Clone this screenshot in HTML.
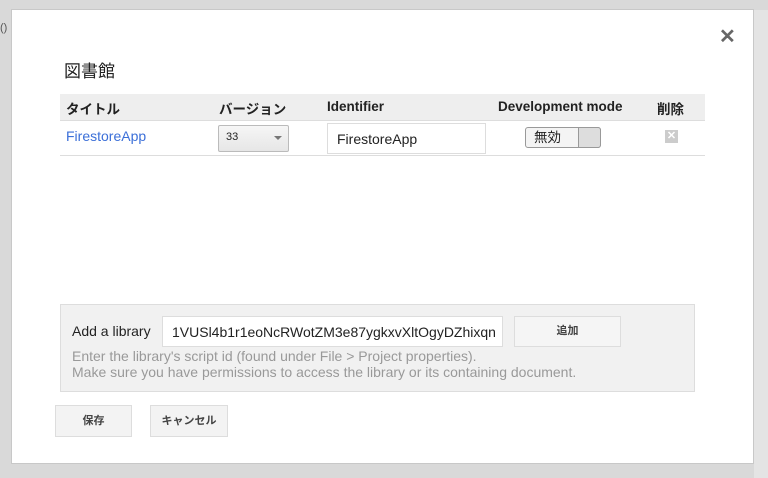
<!DOCTYPE html>
<html><head><meta charset="utf-8"><style>
*{box-sizing:border-box;margin:0;padding:0}
body{width:768px;height:478px;background:#d9d9d9;position:relative;overflow:hidden;font-family:"Liberation Sans","Noto Sans CJK JP",sans-serif;color:#222}
.dlg{position:absolute;left:11px;top:9px;width:743px;height:455px;background:#fff;border:1px solid #c8c8c8}
.abs{position:absolute}
.t13{font-size:13.5px}
</style></head><body>
<div class="abs" style="left:0;top:22px;font-size:11px;color:#555">()</div>
<div class="abs" style="left:754px;top:10px;width:14px;height:468px;background:#e4e4e4"></div>
<div class="dlg">
  <div class="abs" style="left:707px;top:14px;font-size:20px;color:#666;font-weight:bold">✕</div>
  <div class="abs" style="left:52px;top:47px;font-size:17px;color:#222">図書館</div>
  <div class="abs" style="left:48px;top:84px;width:645px;height:27px;background:#eee;border-bottom:1px solid #ddd"></div>
  <div class="abs t13" style="left:54px;top:88px;font-weight:bold">タイトル</div>
  <div class="abs t13" style="left:207px;top:88px;font-weight:bold">バージョン</div>
  <div class="abs t13" style="left:315px;top:89px;font-weight:bold">Identifier</div>
  <div class="abs t13" style="left:486px;top:89px;font-weight:bold">Development mode</div>
  <div class="abs t13" style="left:645px;top:88px;font-weight:bold">削除</div>
  <div class="abs" style="left:48px;top:145px;width:645px;height:1px;background:#ddd"></div>
  <div class="abs" style="left:54px;top:118px;font-size:14px;color:#3b6fd8">FirestoreApp</div>
  <div class="abs" style="left:206px;top:115px;width:71px;height:27px;border:1px solid #bbb;border-radius:2px;background:linear-gradient(#f6f6f6,#e6e6e6);font-size:11px;padding:5px 0 0 7px">33<span style="position:absolute;left:55px;top:10px;border-left:4px solid transparent;border-right:4px solid transparent;border-top:4px solid #777"></span></div>
  <div class="abs" style="left:315px;top:113px;width:159px;height:31px;border:1px solid #ddd;padding:7px 0 0 9px;font-size:14px">FirestoreApp</div>
  <div class="abs" style="left:513px;top:117px;width:76px;height:21px;border:1px solid #999;border-radius:3px;background:#f4f4f4;padding-left:8px;font-size:13.5px;line-height:19px">無効<span style="position:absolute;left:52px;top:-1px;width:23px;height:21px;border:1px solid #999;background:#ddd;border-radius:0 3px 3px 0"></span></div>
  <div class="abs" style="left:653px;top:120px;width:13px;height:13px;background:#ccc;color:#fff;font-size:11px;font-weight:bold;text-align:center;line-height:13px">✕</div>
  <div class="abs" style="left:48px;top:294px;width:635px;height:88px;background:#f1f1f1;border:1px solid #ddd"></div>
  <div class="abs" style="left:60px;top:313px;font-size:14px">Add a library</div>
  <div class="abs" style="left:150px;top:306px;width:341px;height:31px;background:#fff;border:1px solid #ddd;padding:7px 0 0 9px;white-space:nowrap;overflow:hidden;font-size:14px">1VUSl4b1r1eoNcRWotZM3e87ygkxvXltOgyDZhixqn</div>
  <div class="abs" style="left:502px;top:306px;width:107px;height:31px;border:1px solid #ddd;background:#f5f5f5;font-size:11px;font-weight:bold;text-align:center;line-height:29px;color:#444">追加</div>
  <div class="abs" style="left:60px;top:338px;font-size:14px;color:#999;line-height:16px">Enter the library's script id (found under File &gt; Project properties).<br>Make sure you have permissions to access the library or its containing document.</div>
  <div class="abs" style="left:43px;top:395px;width:77px;height:32px;border:1px solid #ddd;background:#f3f3f3;font-size:11px;font-weight:bold;text-align:center;line-height:30px;color:#444">保存</div>
  <div class="abs" style="left:138px;top:395px;width:78px;height:32px;border:1px solid #ddd;background:#f3f3f3;font-size:11px;font-weight:bold;text-align:center;line-height:30px;color:#444">キャンセル</div>
</div>
</body></html>
